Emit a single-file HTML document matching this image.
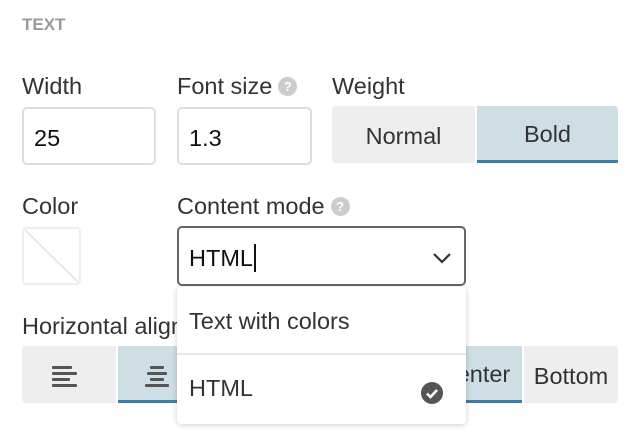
<!DOCTYPE html>
<html><head><meta charset="utf-8"><style>
*{box-sizing:border-box;margin:0;padding:0}
body{width:638px;height:438px;background:#fff;font-family:"Liberation Sans",sans-serif;color:#333;position:relative;overflow:hidden}
.a{position:absolute}
.lbl{font-size:23.5px;color:#333;line-height:1;display:flex;align-items:center;white-space:nowrap}
.inp{border:2px solid #ddd;border-radius:5px;font-size:23.5px;color:#111;padding-left:10px;padding-top:4px;display:flex;align-items:center}
.seg{display:flex;align-items:center;justify-content:center;font-size:23.5px;color:#333;padding-top:3px}
.g{background:#eee}
.b{background:#cfdde5;border-bottom:3px solid #3d7eaa}
.help{width:19px;height:19px;border-radius:50%;background:#ccc;color:#fff;font-size:13px;font-weight:bold;display:inline-flex;align-items:center;justify-content:center;margin-left:6px}
.bar{position:absolute;height:3px;background:#555;border-radius:1px}
</style></head><body>
<div class="a" style="left:22px;top:15px;font-size:17px;font-weight:bold;color:#999">TEXT</div>

<div class="a lbl" style="left:22px;top:75px">Width</div>
<div class="a lbl" style="left:177px;top:75px">Font size<span class="help">?</span></div>
<div class="a lbl" style="left:332px;top:75px">Weight</div>

<div class="a inp" style="left:22px;top:107px;width:134px;height:58px">25</div>
<div class="a inp" style="left:177px;top:107px;width:135px;height:58px">1.3</div>
<div class="a seg g" style="left:332px;top:106px;width:143px;height:57px;border-radius:4px 0 0 4px">Normal</div>
<div class="a seg b" style="left:477px;top:106px;width:141px;height:57px;border-radius:0 4px 0 0">Bold</div>

<div class="a lbl" style="left:22px;top:195px">Color</div>
<div class="a lbl" style="left:177px;top:195px">Content mode<span class="help">?</span></div>

<div class="a" style="left:22px;top:227px;width:59px;height:58px;border:2px solid #eee;border-radius:4px;overflow:hidden">
<svg width="55" height="54"><line x1="0" y1="0" x2="55" y2="54" stroke="#e3e3e3" stroke-width="1.5"/></svg></div>

<div class="a inp" style="left:177px;top:226px;width:289px;height:60px;border-color:#666;border-radius:5px">HTML<span style="display:inline-block;width:2px;height:28px;background:#111;margin-left:1px"></span></div>
<svg class="a" style="left:432px;top:251px" width="20" height="14"><path d="M2 3 L10 11 L18 3" fill="none" stroke="#333" stroke-width="2.2"/></svg>

<div class="a lbl" style="left:22px;top:315px">Horizontal alignment</div>
<div class="a lbl" style="left:300px;top:315px">Vertical position</div>

<div class="a seg g" style="left:22px;top:346px;width:94px;height:57px;border-radius:4px 0 0 4px"></div>
<div class="bar" style="left:52px;top:366px;width:20px"></div>
<div class="bar" style="left:52px;top:372px;width:25px"></div>
<div class="bar" style="left:52px;top:378px;width:18px"></div>
<div class="bar" style="left:52px;top:384px;width:25px"></div>
<div class="a seg b" style="left:118px;top:346px;width:94px;height:57px"></div>
<div class="bar" style="left:150px;top:366px;width:14px"></div>
<div class="bar" style="left:147px;top:372px;width:20px"></div>
<div class="bar" style="left:150px;top:378px;width:14px"></div>
<div class="bar" style="left:145px;top:384px;width:24px"></div>
<div class="a seg b" style="left:428px;top:346px;width:94px;height:57px">Center</div>
<div class="a seg g" style="left:524px;top:346px;width:94px;height:57px;border-radius:0 4px 4px 0">Bottom</div>

<div class="a" style="left:177px;top:287px;width:289px;height:137px;background:#fff;border-radius:4px;box-shadow:0 1px 6px rgba(0,0,0,.2)">
<div style="height:68px;display:flex;align-items:center;padding-left:12px;padding-top:2px;font-size:23.5px;color:#333;border-bottom:2px solid #e6e6e6">Text with colors</div>
<div style="height:67px;display:flex;align-items:center;padding-left:12px;font-size:23.5px;color:#333">HTML</div>
<svg class="a" style="left:244px;top:95px" width="22" height="22"><circle cx="11" cy="11" r="11" fill="#555"/><path d="M6 11.5 L9.5 15 L16 8" fill="none" stroke="#fff" stroke-width="2.6"/></svg>
</div>
</body></html>
